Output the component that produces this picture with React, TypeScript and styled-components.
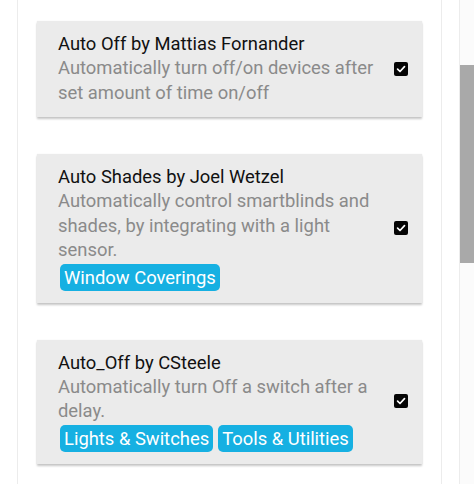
import React from 'react';
import styled, {createGlobalStyle} from 'styled-components';

const GlobalStyle = createGlobalStyle`
    *, *::before, *::after {
        box-sizing: border-box;
    }
    html, body {
        margin: 0;
        padding: 0;
        background: #ffffff;
        overflow: hidden;
    }
    body {
        font-family: Roboto, 'Noto Sans', sans-serif;
    }
`;

const Screen = styled.div`
    display: flex;
    width: 474px;
    height: 484px;
    overflow: hidden;
    background: #ffffff;
`;

const Panel = styled.div`
    margin-left: 17px;
    width: 425px;
    flex-shrink: 0;
    border-left: 1px solid #ececec;
    border-right: 1px solid #ececec;
    padding: 21px 19px 0 19px;
    display: flex;
    flex-direction: column;
    gap: 37px;
`;

const ScrollTrack = styled.div`
    margin-left: 17px;
    flex: 1;
    border-left: 1px solid #ececec;
    background: #fbfbfb;
`;

const ScrollThumb = styled.div`
    margin-top: 65px;
    height: 198px;
    background: #a9a9a9;
`;

const Card = styled.div`
    display: flex;
    align-items: center;
    background: #ebebeb;
    padding: 11px 14px 12px 21px;
    box-shadow: 0 2px 2px rgba(0, 0, 0, 0.22), 0 0 1px rgba(0, 0, 0, 0.08);
`;

const Body = styled.div`
    flex: 1;
    min-width: 0;
    padding-right: 9px;
`;

const Title = styled.div`
    font-size: 18.4px;
    line-height: 24px;
    color: #111111;
`;

const Description = styled.div`
    font-size: 18.4px;
    line-height: 24.5px;
    color: #8a8a8a;
`;

const Tags = styled.div`
    display: flex;
    gap: 5px;
    margin-top: 1px;
    padding-left: 2px;
`;

const Tag = styled.span`
    display: inline-block;
    background: #16b0e2;
    color: #ffffff;
    font-size: 18.4px;
    line-height: 27px;
    padding: 0 4px;
    border-radius: 5px;
`;

const Check = styled.div`
    width: 14px;
    height: 14px;
    border-radius: 2px;
    background: #050505;
    display: flex;
    align-items: center;
    justify-content: center;
    flex-shrink: 0;
`;

type App = {title: string; description: string; tags: string[]};

const apps: App[] = [
    {
        title: 'Auto Off by Mattias Fornander',
        description: 'Automatically turn off/on devices after set amount of time on/off',
        tags: [],
    },
    {
        title: 'Auto Shades by Joel Wetzel',
        description: 'Automatically control smartblinds and shades, by integrating with a light sensor.',
        tags: ['Window Coverings'],
    },
    {
        title: 'Auto_Off by CSteele',
        description: 'Automatically turn Off a switch after a delay.',
        tags: ['Lights & Switches', 'Tools & Utilities'],
    },
];

const CheckMark = () => (
    <svg width="10" height="10" viewBox="0 0 10 10">
        <path d="M1.6 5.2 L4 7.5 L8.5 2.6" fill="none" stroke="#fff" strokeWidth="1.7" strokeLinecap="round" strokeLinejoin="round"/>
    </svg>
);

export default function AppList() {
    return (
        <Screen>
            <GlobalStyle/>
            <Panel>
                {apps.map((app, index) => (
                    <Card key={index}>
                        <Body>
                            <Title>{app.title}</Title>
                            <Description>{app.description}</Description>
                            {app.tags.length > 0 && (
                                <Tags>
                                    {app.tags.map(tag => <Tag key={tag}>{tag}</Tag>)}
                                </Tags>
                            )}
                        </Body>
                        <Check><CheckMark/></Check>
                    </Card>
                ))}
            </Panel>
            <ScrollTrack>
                <ScrollThumb/>
            </ScrollTrack>
        </Screen>
    );
}
